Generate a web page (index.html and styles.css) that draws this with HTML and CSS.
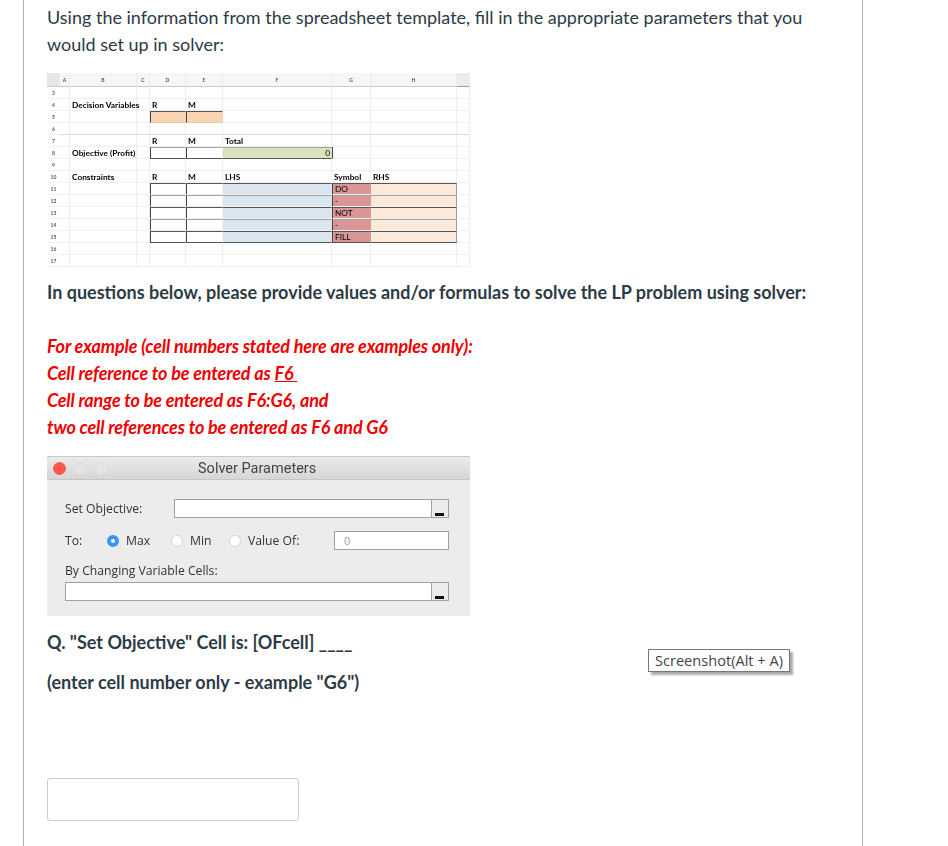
FILE: index.html
```html
<!DOCTYPE html>
<html lang="en">
<head>
<meta charset="utf-8">
<title>Solver question</title>
<link rel="stylesheet" href="styles.css">
</head>
<body>
<main class="page">
  <p class="intro">Using the information from the spreadsheet template, fill in the appropriate parameters that you would set up in solver:</p>

  <table class="sheet">
    <colgroup>
      <col class="c-hd"><col class="c-a"><col class="c-b"><col class="c-c"><col class="c-d"><col class="c-e"><col class="c-f"><col class="c-g"><col class="c-h"><col class="c-i">
    </colgroup>
    <tr class="head"><th class="corner"></th><th>A</th><th>B</th><th>C</th><th>D</th><th>E</th><th>F</th><th>G</th><th>H</th><th class="tab"></th></tr>
    <tr><th>3</th><td></td><td></td><td></td><td></td><td></td><td></td><td></td><td></td><td></td></tr>
    <tr><th>4</th><td></td><td class="b">Decision Variables</td><td></td><td class="b">R</td><td class="b">M</td><td></td><td></td><td></td><td></td></tr>
    <tr><th>5</th><td></td><td></td><td></td><td class="orange box vl"></td><td class="orange box vl"></td><td></td><td></td><td></td><td></td></tr>
    <tr class="thick"><th>6</th><td></td><td></td><td></td><td></td><td></td><td></td><td></td><td></td><td></td></tr>
    <tr><th>7</th><td></td><td></td><td></td><td class="b">R</td><td class="b">M</td><td class="b">Total</td><td></td><td></td><td></td></tr>
    <tr class="soft last"><th>8</th><td></td><td class="b">Objective (Profit)</td><td></td><td class="box vl"></td><td class="box vl"></td><td class="green box num">0</td><td class="vl"></td><td></td><td></td></tr>
    <tr><th>9</th><td></td><td></td><td></td><td></td><td></td><td></td><td></td><td></td><td></td></tr>
    <tr><th>10</th><td></td><td class="b">Constraints</td><td></td><td class="b">R</td><td class="b">M</td><td class="b">LHS</td><td class="b">Symbol</td><td class="b">RHS</td><td></td></tr>
    <tr><th>11</th><td></td><td></td><td></td><td class="box vl"></td><td class="box vl"></td><td class="blue box"></td><td class="red box vl">DO</td><td class="peach box"></td><td></td></tr>
    <tr class="soft"><th>12</th><td></td><td></td><td></td><td class="box vl"></td><td class="box vl"></td><td class="blue box"></td><td class="red box vl">-</td><td class="peach box"></td><td></td></tr>
    <tr><th>13</th><td></td><td></td><td></td><td class="box vl"></td><td class="box vl"></td><td class="blue box"></td><td class="red box vl">NOT</td><td class="peach box"></td><td></td></tr>
    <tr class="soft"><th>14</th><td></td><td></td><td></td><td class="box vl"></td><td class="box vl"></td><td class="blue box"></td><td class="red box vl">-</td><td class="peach box"></td><td></td></tr>
    <tr class="last"><th>15</th><td></td><td></td><td></td><td class="box vl"></td><td class="box vl"></td><td class="blue box"></td><td class="red box vl">FILL</td><td class="peach box"></td><td></td></tr>
    <tr><th>16</th><td></td><td></td><td></td><td></td><td></td><td></td><td></td><td></td><td></td></tr>
    <tr><th>17</th><td></td><td></td><td></td><td></td><td></td><td></td><td></td><td></td><td></td></tr>
  </table>

  <p class="lead">In questions below, please provide values and/or formulas to solve the LP problem using solver:</p>

  <div class="example">
    <p>For example (cell numbers stated here are examples only):</p>
    <p>Cell reference to be entered as <u>F6&nbsp;</u></p>
    <p>Cell range to be entered as F6:G6, and</p>
    <p>two cell references to be entered as F6 and G6</p>
  </div>

  <section class="dialog">
    <header class="titlebar">
      <span class="light light-red"></span>
      <span class="light"></span>
      <span class="light"></span>
      <span class="title">Solver Parameters</span>
    </header>
    <div class="dialog-body">
      <div class="row row-objective">
        <span class="lbl-objective">Set Objective:</span>
        <div class="field field-grow"><span class="picker"></span></div>
      </div>
      <div class="row row-to">
        <span class="lbl-to">To:</span>
        <span class="radio radio-on"></span><span class="lbl-max">Max</span>
        <span class="radio"></span><span class="lbl-min">Min</span>
        <span class="radio"></span><span class="lbl-value">Value Of:</span>
        <div class="field field-value">0</div>
      </div>
      <div class="lbl-changing">By Changing Variable Cells:</div>
      <div class="field field-full"><span class="picker"></span></div>
    </div>
  </section>

  <p class="question">Q. "Set Objective" Cell is: [OFcell] ____</p>
  <p class="hint">(enter cell number only - example "G6")</p>

  <div class="answer"></div>

  <div class="tooltip">Screenshot(Alt + A)</div>
</main>
</body>
</html>
```

FILE: styles.css
```css
* { box-sizing: border-box; }
html, body { margin: 0; padding: 0; background: #fff; }
body { height: 846px; overflow: hidden; font-family: Lato, "Liberation Sans", sans-serif; color: #2d3b45; }
p { margin: 0; }

.page {
  position: relative;
  width: 840px;
  height: 846px;
  margin-left: 23px;
  padding: 4px 47px 0 23px;
  border-left: 1px solid #b0b0b0;
  border-right: 1px solid #b0b0b0;
}
.intro { font-size: 18px; line-height: 27px; width: 770px; }

/* spreadsheet picture */
.sheet {
  margin-top: 15px;
  width: 423px;
  height: 194px;
  table-layout: fixed;
  border-collapse: separate;
  border-spacing: 0;
  font-family: Lato, "Liberation Sans", sans-serif;
  font-size: 8.3px;
  color: #000;
  filter: blur(0.4px);
}
.c-hd { width: 13px; } .c-a { width: 10px; } .c-b { width: 67px; } .c-c { width: 13px; }
.c-d { width: 36px; } .c-e { width: 37px; } .c-f { width: 109px; } .c-g { width: 39px; }
.c-h { width: 86px; } .c-i { width: 13px; }
.sheet tr { height: 12px; }
.sheet tr.head { height: 14px; }
.sheet th {
  padding: 0;
  height: 12px;
  line-height: 10px;
  font-size: 5px;
  font-weight: 700;
  color: #555;
  text-align: center;
  background: #fff;
  border-bottom: 1px solid #f2f2f2;
}
.sheet .head th { height: 14px; background: #f6f6f6; border-bottom: 1px solid #ccc; border-right: 1px solid #ececec; }
.sheet .head th.corner { background: #e6e6e6; }
.sheet .head th.tab { background: #ececec; border-bottom: 1px solid #7fb08f; }
.sheet td {
  padding: 0 1px 0 2px;
  height: 12px;
  line-height: 10px;
  overflow: visible;
  white-space: nowrap;
  border-right: 1px solid #eeeeee;
  border-bottom: 1px solid #f0f0f0;
}
.sheet .thick td { border-bottom-color: #d9d9d9; }
.sheet td.b { font-weight: 700; }
.sheet td.box { border-top: 1px solid #555; }
.sheet td.vl { border-left: 1px solid #444; }
.sheet .soft td.box { border-top-color: #a0a0a0; }
.sheet .last td.box { border-bottom-color: #555; }
.sheet td.orange { background: #fbd4b4; border-bottom-color: #f0c8a8; border-right-color: #fbd4b4; }
.sheet td.green { background: #d7e4bc; border-right-color: #d7e4bc; }
.sheet td.blue { background: #dce6f1; border-right-color: #dce6f1; }
.sheet td.red { background: #da9694; border-right-color: #da9694; }
.sheet td.peach { background: #fde9d9; border-right-color: #999; }
.sheet td.num { text-align: right; }

.lead { margin-top: 12px; font-size: 18px; line-height: 27px; font-weight: 700; white-space: nowrap; }

.example {
  margin-top: 27px;
  font-size: 18px;
  line-height: 27px;
  font-weight: 700;
  font-style: italic;
  color: #ee0000;
  letter-spacing: -0.13px;
}

/* solver dialog */
.dialog {
  margin-top: 15px;
  width: 423px;
  height: 160px;
  background: #ececec;
  color: #333;
  font-family: "Open Sans", "Liberation Sans", sans-serif;
  font-size: 12.2px;
  filter: blur(0.25px);
}
.titlebar {
  display: flex;
  align-items: center;
  gap: 8px;
  height: 24px;
  padding-left: 6px;
  position: relative;
  background: linear-gradient(#ebebeb, #d6d6d6);
  border-top: 1px solid #c8c8c8;
  border-bottom: 1px solid #c6c6c6;
}
.light { width: 13px; height: 13px; border-radius: 50%; background: #e4e4e4; border: 1px solid #dddddd; }
.light-red { background: #fc5650; border-color: #fc5650; }
.title { position: absolute; left: 151px; top: 3px; font-size: 14.5px; line-height: 17px; color: #444; font-family: Roboto, "Liberation Sans", sans-serif; }
.dialog-body { padding: 19px 21px 0 18px; }
.row { display: flex; align-items: center; }
.row-objective { height: 19px; }
.lbl-objective { width: 109px; flex: none; }
.field {
  position: relative;
  height: 19px;
  background: #fff;
  border: 1px solid #a0a0a0;
}
.field-grow { flex: 1; }
.field-full { margin-top: 4px; }
.field-value { width: 115px; margin-left: auto; padding-left: 9px; color: #999; font-size: 11px; line-height: 18px; }
.picker {
  position: absolute;
  right: 0;
  top: 0;
  bottom: 0;
  width: 17px;
  background: #ececec;
  border-left: 1px solid #a0a0a0;
}
.picker::after {
  content: "";
  position: absolute;
  left: 3px;
  right: 4px;
  bottom: 1px;
  height: 3px;
  background: #111;
}
.row-to { height: 19px; margin-top: 13px; }
.lbl-to { width: 42px; flex: none; }
.radio {
  flex: none;
  width: 12px;
  height: 12px;
  border-radius: 50%;
  background: #fff;
  border: 1px solid #d4d4d4;
}
.radio-on { background: #fff; border: 4px solid #3d94f6; }
.lbl-max { margin-left: 7px; width: 45px; flex: none; }
.lbl-min { margin-left: 7px; width: 39px; flex: none; }
.lbl-value { margin-left: 7px; flex: none; }
.lbl-changing { margin-top: 14px; height: 14px; line-height: 14px; }

.question { margin-top: 13px; font-size: 18px; line-height: 27px; font-weight: 700; }
.hint { margin-top: 13px; font-size: 18px; line-height: 27px; font-weight: 700; }

.answer {
  margin-top: 82px;
  width: 252px;
  height: 43px;
  border: 1px solid #c7cdd1;
  border-radius: 3px;
  background: #fff;
}

.tooltip {
  position: absolute;
  left: 624px;
  top: 649px;
  width: 142px;
  height: 23px;
  background: #fff;
  border: 1px solid #777;
  box-shadow: 3px 3px 2px #aaa;
  font-family: "Open Sans", "Liberation Sans", sans-serif;
  font-size: 14.6px;
  line-height: 21px;
  text-align: center;
  color: #444;
  white-space: nowrap;
}
```
